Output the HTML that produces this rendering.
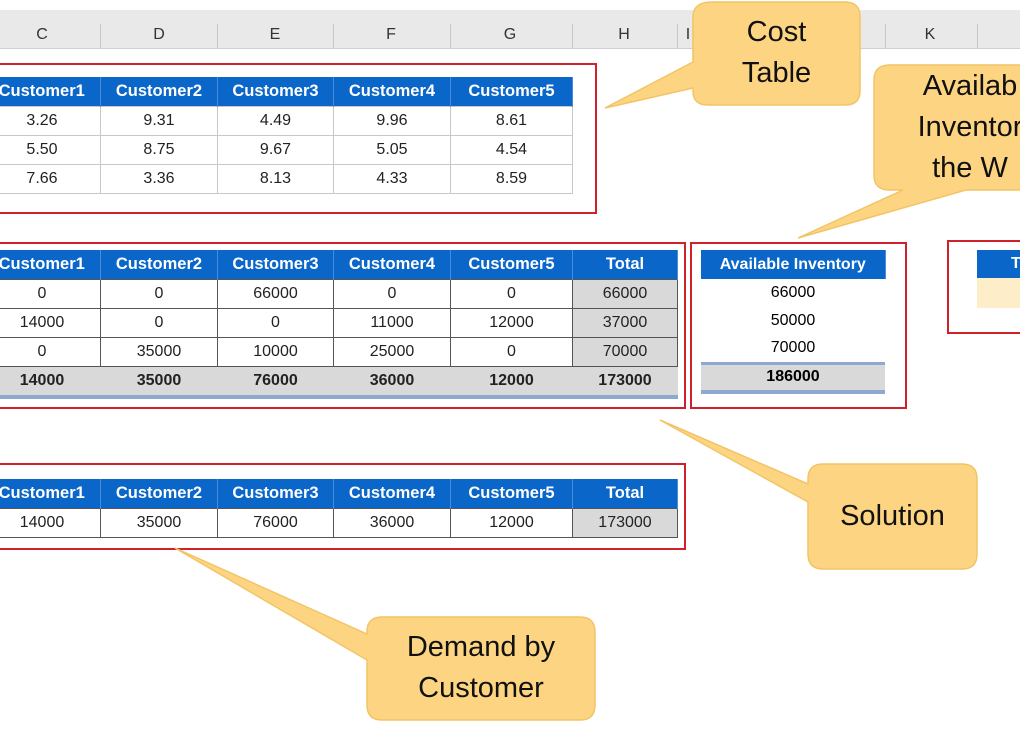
<!DOCTYPE html>
<html><head><meta charset="utf-8"><style>
body{margin:0;width:1020px;height:732px;overflow:hidden;background:#fff;position:relative;font-family:"Liberation Sans",sans-serif}
.a{position:absolute}
table{position:absolute;border-collapse:collapse;table-layout:fixed;font-size:16px;text-align:center}
td{padding:0;overflow:hidden;white-space:nowrap}
th{background:#0a66c8;color:#fff;font-weight:bold;font-size:16.5px;padding:0;white-space:nowrap;overflow:hidden;border-right:1px solid #4a8ad8}
.c td{border:1px solid #c8c8c8;height:28px;color:#222}
.s td{border:1px solid #555;height:28px;color:#222}
.g{background:#d9d9d9}
.tr td{font-weight:bold;background:#d9d9d9;border-bottom:4px solid #8ea9d0;border-left:none;border-right:none}
.red{position:absolute;border:2.5px solid #d0202a;box-sizing:border-box}
.hdr{position:absolute;top:10px;height:38px;left:0;width:1020px;background:#e9e9e9;border-bottom:1px solid #cfcfcf}
.hdr span{position:absolute;top:16px;font-size:16px;color:#333;transform:translateX(-50%)}
.hdr i{position:absolute;top:14px;height:24px;border-left:1px solid #c8c8c8}
.co{position:absolute;font-size:29px;color:#111;text-align:center;line-height:41px}
</style></head><body>
<div class="hdr">
<span style="left:42px">C</span><span style="left:159px">D</span><span style="left:275px">E</span><span style="left:391px">F</span><span style="left:510px">G</span><span style="left:624px">H</span><span style="left:688px">I</span><span style="left:930px">K</span>
<i style="left:100px"></i><i style="left:217px"></i><i style="left:333px"></i><i style="left:450px"></i><i style="left:572px"></i><i style="left:677px"></i><i style="left:693px"></i><i style="left:885px"></i><i style="left:977px"></i>
</div>

<div class="red" style="left:-5px;top:63px;width:602px;height:151px"></div>
<table class="c" style="left:-17px;top:77px">
<colgroup><col style="width:117px"><col style="width:117px"><col style="width:116px"><col style="width:117px"><col style="width:122px"></colgroup>
<tr style="height:29px"><th>Customer1</th><th>Customer2</th><th>Customer3</th><th>Customer4</th><th>Customer5</th></tr>
<tr><td>3.26</td><td>9.31</td><td>4.49</td><td>9.96</td><td>8.61</td></tr>
<tr><td>5.50</td><td>8.75</td><td>9.67</td><td>5.05</td><td>4.54</td></tr>
<tr><td>7.66</td><td>3.36</td><td>8.13</td><td>4.33</td><td>8.59</td></tr>
</table>

<div class="red" style="left:-5px;top:242px;width:691px;height:167px"></div>
<table class="s" style="left:-17px;top:250px">
<colgroup><col style="width:117px"><col style="width:117px"><col style="width:116px"><col style="width:117px"><col style="width:122px"><col style="width:105px"></colgroup>
<tr style="height:29px"><th>Customer1</th><th>Customer2</th><th>Customer3</th><th>Customer4</th><th>Customer5</th><th>Total</th></tr>
<tr><td>0</td><td>0</td><td>66000</td><td>0</td><td>0</td><td class="g">66000</td></tr>
<tr><td>14000</td><td>0</td><td>0</td><td>11000</td><td>12000</td><td class="g">37000</td></tr>
<tr><td>0</td><td>35000</td><td>10000</td><td>25000</td><td>0</td><td class="g">70000</td></tr>
<tr class="tr"><td>14000</td><td>35000</td><td>76000</td><td>36000</td><td>12000</td><td>173000</td></tr>
</table>

<div class="red" style="left:690px;top:242px;width:217px;height:167px"></div>
<table style="left:701px;top:250px;font-size:16px">
<colgroup><col style="width:184px"></colgroup>
<tr style="height:29px"><th style="font-size:16px">Available Inventory</th></tr>
<tr style="height:28px"><td>66000</td></tr>
<tr style="height:28px"><td>50000</td></tr>
<tr style="height:28px"><td>70000</td></tr>
<tr class="tr" style="height:29px"><td style="border-top:3px solid #8ea9d0">186000</td></tr>
</table>

<div class="red" style="left:947px;top:240px;width:90px;height:94px"></div>
<div class="a" style="left:977px;top:250px;width:60px;height:28px;background:#0a66c8;color:#fff;font-weight:bold;font-size:16px;line-height:28px;padding-left:34px;box-sizing:border-box">T</div>
<div class="a" style="left:977px;top:278px;width:60px;height:30px;background:#fdedc8"></div>

<div class="red" style="left:-5px;top:463px;width:691px;height:87px"></div>
<table class="s" style="left:-17px;top:479px">
<colgroup><col style="width:117px"><col style="width:117px"><col style="width:116px"><col style="width:117px"><col style="width:122px"><col style="width:105px"></colgroup>
<tr style="height:29px"><th>Customer1</th><th>Customer2</th><th>Customer3</th><th>Customer4</th><th>Customer5</th><th>Total</th></tr>
<tr><td>14000</td><td>35000</td><td>76000</td><td>36000</td><td>12000</td><td class="g">173000</td></tr>
</table>

<svg class="a" style="left:0;top:0" width="1020" height="732">
<g fill="#fdd582" stroke="#f2c466" stroke-width="1.5">
<path d="M712,2 H845 Q860,2 860,17 V91 Q860,105 845,105 H708 Q693,105 693,91 V88 L605,108 L693,62 V17 Q693,2 712,2 Z"/>
<path d="M890,65 H1030 V190 H966 L798,238 L903,190 H890 Q874,190 874,175 V80 Q874,65 890,65 Z"/>
<path d="M823,464 H962 Q977,464 977,479 V554 Q977,569 962,569 H823 Q808,569 808,554 V502 L660,420 L808,484 V479 Q808,464 823,464 Z"/>
<path d="M382,617 H580 Q595,617 595,632 V705 Q595,720 580,720 H382 Q367,720 367,705 V660 L175,548 L367,634 V632 Q367,617 382,617 Z"/>
</g>
</svg>
<div class="co" style="left:693px;top:12px;width:167px">Cost<br>Table</div>
<div class="co" style="left:890px;top:66px;width:160px">Availab<br>Inventor<br>the W</div>
<div class="co" style="left:808px;top:496px;width:169px">Solution</div>
<div class="co" style="left:367px;top:627px;width:228px">Demand by<br>Customer</div>
</body></html>
